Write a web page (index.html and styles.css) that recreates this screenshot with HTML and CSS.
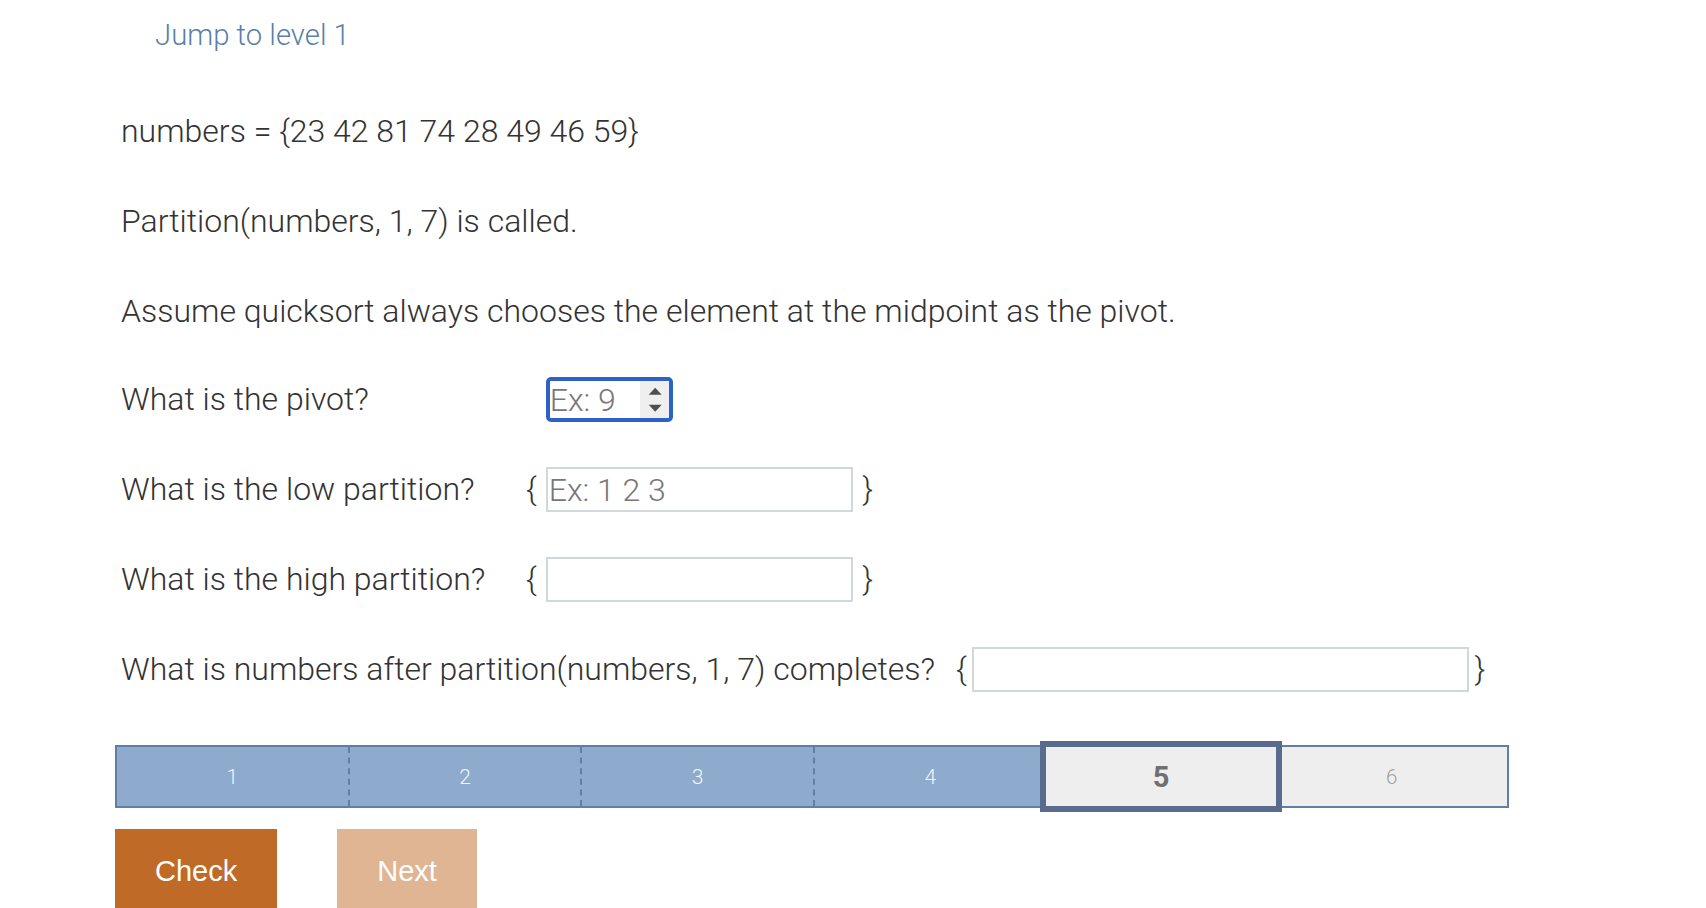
FILE: index.html
```html
<!DOCTYPE html>
<html lang="en">
<head>
<meta charset="utf-8">
<title>Quicksort partition</title>
<link rel="stylesheet" href="styles.css">
</head>
<body>
<div class="page">
  <a class="jump" href="#">Jump to level 1</a>
  <p class="line first">numbers = {23 42 81 74 28 49 46 59}</p>
  <p class="line">Partition(numbers, 1, 7) is called.</p>
  <p class="line">Assume quicksort always chooses the element at the midpoint as the pivot.</p>

  <div class="qtable">
    <span class="qlabel">What is the pivot?</span>
    <span class="brace"></span>
    <div class="num-input">
      <input class="num-field" type="text" placeholder="Ex: 9">
      <span class="spin">
        <svg width="29" height="37" viewBox="0 0 29 37">
          <path d="M8.7 13.7 L15.2 6.7 L21.7 13.7 Z" fill="#4f4f4f"/>
          <path d="M8.7 23.7 L21.7 23.7 L15.2 30.7 Z" fill="#4f4f4f"/>
        </svg>
      </span>
    </div>
    <span class="brace close"></span>

    <span class="qlabel">What is the low partition?</span>
    <span class="brace">{</span>
    <input class="field set" type="text" placeholder="Ex: 1 2 3">
    <span class="brace close">}</span>

    <span class="qlabel">What is the high partition?</span>
    <span class="brace">{</span>
    <input class="field set" type="text">
    <span class="brace close">}</span>
  </div>

  <div class="after">
    <span class="qlabel">What is numbers after partition(numbers, 1, 7) completes?</span>
    <span class="brace open">{</span>
    <input class="field wide" type="text">
    <span class="brace close">}</span>
  </div>

  <div class="bar">
    <div class="seg done">1</div>
    <div class="seg done sep">2</div>
    <div class="seg done sep">3</div>
    <div class="seg done sep">4</div>
    <div class="seg current">5</div>
    <div class="seg todo">6</div>
  </div>

  <div class="buttons">
    <button class="btn check">Check</button>
    <button class="btn next">Next</button>
  </div>
</div>
</body>
</html>
```

FILE: styles.css
```css
html, body {
  margin: 0;
  padding: 0;
  overflow: hidden;
  background: #ffffff;
}

body {
  font-family: Roboto, "Liberation Sans", Arial, sans-serif;
  font-weight: 300;
  color: #333333;
}

.page {
  display: flex;
  flex-direction: column;
  align-items: flex-start;
  padding: 15px 0 0 115px;
}

.jump {
  margin-left: 40px;
  font-size: 29.3px;
  line-height: 40px;
  height: 40px;
  color: #5b7fa8;
  text-decoration: none;
  font-weight: 300;
}

.line {
  margin: 50px 0 0 6px;
  font-size: 32px;
  line-height: 40px;
  height: 40px;
}

.line.first {
  margin-top: 56px;
}

.qtable {
  margin: 46px 0 0 6px;
  display: grid;
  grid-template-columns: 405px 19.7px auto auto;
  grid-auto-rows: 45px;
  row-gap: 45px;
  align-items: center;
  font-size: 32px;
}

.qlabel {
  font-size: 32px;
  line-height: 45px;
  white-space: nowrap;
}

.brace {
  font-size: 32px;
  line-height: 45px;
  color: #333333;
}

.qtable .brace.close {
  padding-left: 9.8px;
}

.field {
  box-sizing: border-box;
  height: 45px;
  border: 2px solid #d1d8dc;
  border-radius: 0;
  padding: 0 0 0 1px;
  margin: 0;
  font-family: Roboto, "Liberation Sans", Arial, sans-serif;
  font-weight: 300;
  font-size: 32px;
  color: #333333;
  background: #ffffff;
  outline: none;
}

.field::placeholder,
.num-field::placeholder {
  color: #777777;
  opacity: 1;
}

.field.set {
  width: 307px;
}

.field.wide {
  width: 497px;
}

.num-input {
  box-sizing: border-box;
  width: 127px;
  height: 45px;
  display: flex;
  border: 4px solid #2d61c8;
  border-radius: 5px;
  overflow: hidden;
  background: #ffffff;
}

.num-field {
  flex: 1;
  min-width: 0;
  border: none;
  outline: none;
  padding: 0;
  margin: 0;
  height: 37px;
  font-family: Roboto, "Liberation Sans", Arial, sans-serif;
  font-weight: 300;
  font-size: 32px;
  color: #333333;
  background: #ffffff;
}

.spin {
  width: 29px;
  height: 37px;
  background: #efefef;
  display: block;
}

.spin svg {
  display: block;
}

.after {
  margin: 45px 0 0 6px;
  height: 45px;
  display: flex;
  align-items: center;
}

.after .brace.open {
  margin-left: 21px;
}

.after .field {
  margin-left: 5.6px;
}

.after .brace.close {
  margin-left: 5.4px;
}

.bar {
  margin-top: 53px;
  box-sizing: border-box;
  width: 1394px;
  height: 63px;
  border: 2px solid #5f7fa5;
  display: flex;
}

.seg {
  flex: 1;
  display: flex;
  align-items: center;
  justify-content: center;
  font-size: 21px;
  font-weight: 300;
}

.seg.done {
  background: #8eaacd;
  color: #f2f5f9;
}

.seg.sep {
  border-left: 2px dashed #5f7fa5;
}

.seg.current {
  position: relative;
  z-index: 1;
  background: #eeeeee;
  outline: 6px solid #5a6c8d;
  color: #707070;
  font-weight: 700;
  font-size: 29px;
}

.seg.todo {
  background: #eeeeee;
  color: #a0a0a0;
  font-size: 20.5px;
}

.buttons {
  margin-top: 21px;
  display: flex;
  gap: 60px;
}

.btn {
  height: 79px;
  padding: 5px 40px 0 40px;
  border: none;
  border-radius: 0;
  font-family: "Liberation Sans", Arial, sans-serif;
  font-size: 29px;
  line-height: 74px;
  color: #ffffff;
  cursor: pointer;
  display: block;
}

.btn.check {
  background: #c06a28;
}

.btn.next {
  background: #dfb593;
}
```
